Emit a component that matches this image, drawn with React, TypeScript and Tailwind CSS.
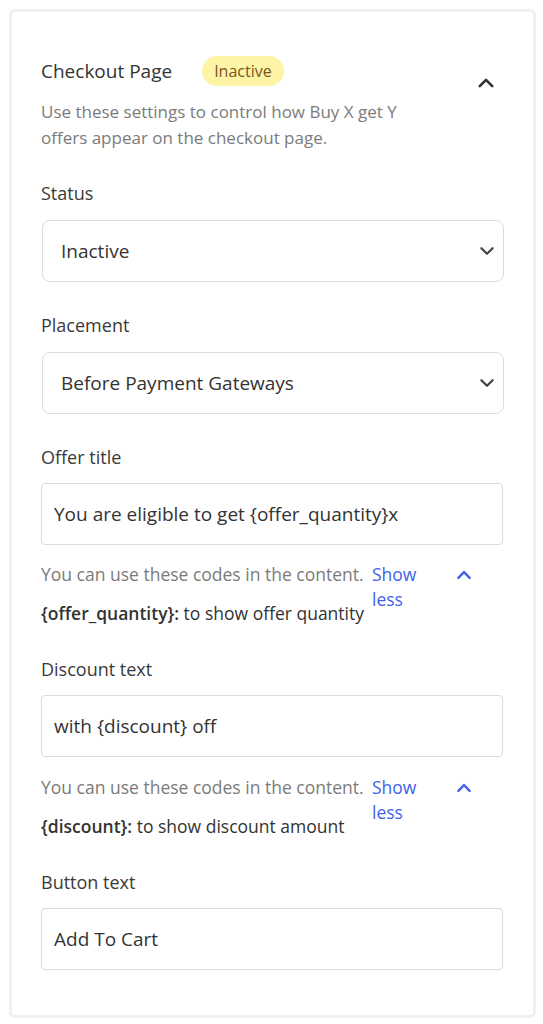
import React from "react";

const font = { fontFamily: '"Open Sans", "Noto Sans", sans-serif' };

function ChevronDown({ className }: { className?: string }) {
  return (
    <svg viewBox="0 0 16 16" className={className} fill="none" stroke="currentColor" strokeWidth="2" strokeLinecap="round" strokeLinejoin="round">
      <path d="M3 5.5 8 10.5 13 5.5" />
    </svg>
  );
}

function ChevronUp({ className }: { className?: string }) {
  return (
    <svg viewBox="0 0 16 16" className={className} fill="none" stroke="currentColor" strokeWidth="2.2" strokeLinecap="round" strokeLinejoin="round">
      <path d="M3 10.5 8 5.5 13 10.5" />
    </svg>
  );
}

function Label({ children }: { children: React.ReactNode }) {
  return <div className="text-[18px] leading-[26px] text-[#3a3a3a]">{children}</div>;
}

function Select({ value }: { value: string }) {
  return (
    <div className="mt-[14px] ml-[1px] flex h-[62px] items-center justify-between rounded-[8px] border border-[#dcdcdc] bg-white pl-[18px] pr-[7px]">
      <span className="text-[19px] text-[#333]">{value}</span>
      <ChevronDown className="h-[18px] w-[18px] text-[#444]" />
    </div>
  );
}

function TextInput({ value }: { value: string }) {
  return (
    <div className="mt-[13px] mr-[1px] flex h-[62px] items-center rounded-[4px] border border-[#dcdcdc] bg-white pl-[12px]">
      <span className="text-[19px] text-[#333]">{value}</span>
    </div>
  );
}

function Helper({ code, desc, top }: { code: string; desc: string; top: string }) {
  return (
    <div className={`${top} flex items-start`}>
      <div className="w-[331px]">
        <div className="text-[17.5px] leading-[25px] text-[#7b7b7b]">You can use these codes in the content.</div>
        <div className="mt-[14px] text-[17.5px] leading-[25px] text-[#333]">
          <span className="font-semibold">{code}:</span> to show {desc}
        </div>
      </div>
      <div className="w-[50px] text-[17.5px] leading-[25px] text-[#4262e8]">Show less</div>
      <div className="ml-[33px] flex h-[25px] items-center">
        <ChevronUp className="h-[18px] w-[18px] text-[#4262e8]" />
      </div>
    </div>
  );
}

export default function App() {
  return (
    <div className="min-h-screen bg-white pt-[9px] pl-[9px] pr-[7px] pb-[8px]" style={font}>
      <div className="rounded-[6px] border-[3px] border-[#f0f0f0] px-[29px] pt-[44px] pb-[45px]">
        <div className="flex h-[30px] items-start justify-between">
          <div className="flex h-[30px] items-center">
            <span className="text-[19px] text-[#333]">Checkout Page</span>
            <span className="ml-[30px] flex h-[30px] items-center rounded-full bg-[#fdf4a6] px-[12px] text-[16px] text-[#7a5520]">Inactive</span>
          </div>
          <ChevronUp className="mr-[8px] mt-[17px] h-[20px] w-[20px] text-[#333]" />
        </div>
        <p className="mt-[13px] w-[360px] text-[17px] leading-[26px] text-[#7b7b7b]">
          Use these settings to control how Buy X get Y offers appear on the checkout page.
        </p>

        <div className="mt-[29px]">
          <Label>Status</Label>
          <Select value="Inactive" />
        </div>

        <div className="mt-[30px]">
          <Label>Placement</Label>
          <Select value="Before Payment Gateways" />
        </div>

        <div className="mt-[30px]">
          <Label>Offer title</Label>
          <TextInput value="You are eligible to get {offer_quantity}x" />
          <Helper code="{offer_quantity}" desc="offer quantity" top="mt-[17px]" />
        </div>

        <div className="mt-[30px]">
          <Label>Discount text</Label>
          <TextInput value="with {discount} off" />
          <Helper code="{discount}" desc="discount amount" top="mt-[18px]" />
        </div>

        <div className="mt-[30px]">
          <Label>Button text</Label>
          <TextInput value="Add To Cart" />
        </div>
      </div>
    </div>
  );
}
